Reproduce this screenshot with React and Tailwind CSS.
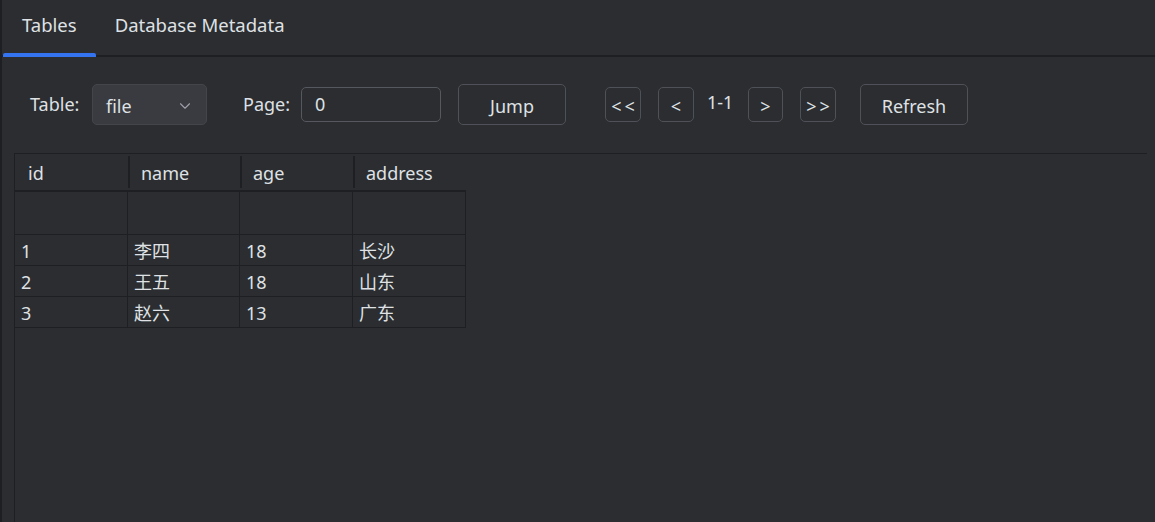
import { ChevronDown } from 'lucide-react';

const font = { fontFamily: '"Noto Sans", "Noto Sans CJK SC", sans-serif' };

const columns = ['id', 'name', 'age', 'address'];
const headWidths = ['w-[115px]', 'w-[112px]', 'w-[113px]', 'w-[111px]'];
const cellWidths = ['w-[113px]', 'w-[112px]', 'w-[113px]', 'w-[113px]'];

const rows = [
  { id: '', name: '', age: '', address: '', tall: true },
  { id: '1', name: '李四', age: '18', address: '长沙' },
  { id: '2', name: '王五', age: '18', address: '山东' },
  { id: '3', name: '赵六', age: '13', address: '广东' },
];

// outlined button used in the toolbar
const OutlineButton = ({ children, className = '' }) => (
  <button
    className={`flex items-center justify-center rounded-[5px] border border-[#4e5157] pt-[3px] text-[18px] text-[#dfe1e5] ${className}`}
  >
    {children}
  </button>
);

const Tab = ({ label, active }) => (
  <div className="relative h-full px-[19px] flex items-center pb-[5px] text-[18.5px]">
    <span>{label}</span>
    {active && <div className="absolute left-0 right-0 bottom-[-2px] h-[4px] rounded-t-[2px] bg-[#3574f0]" />}
  </div>
);

export default function App() {
  return (
    <div style={font} className="h-[522px] overflow-hidden bg-[#2b2d30] text-[#dfe1e5] border-l-2 border-[#1e1f22] flex flex-col">
      {/* tab strip */}
      <div className="h-[57px] flex items-stretch pl-px border-b-2 border-[#1e1f22] shrink-0">
        <Tab label="Tables" active />
        <Tab label="Database Metadata" />
      </div>

      {/* toolbar */}
      <div className="flex items-center pt-[27px] pb-[28px] pl-[28px] shrink-0">
        <span className="w-[62px] text-[18px]">Table:</span>
        <div className="w-[115px] h-[41px] rounded-[5px] border border-[#43454a] bg-[#393b40] flex items-center justify-between pl-[13px] pr-[12px]">
          <span className="text-[18px] pt-[3px]">file</span>
          <ChevronDown size={18} strokeWidth={1.5} className="text-[#9da0a8] mt-[2px]" />
        </div>
        <span className="ml-[36px] w-[58px] text-[18px]">Page:</span>
        <div className="w-[140px] h-[35px] rounded-[5px] border border-[#55585e] flex items-center pl-[13px] text-[18px]">0</div>
        <OutlineButton className="ml-[17px] w-[108px] h-[41px]">Jump</OutlineButton>
        <OutlineButton className="ml-[39px] w-[36px] h-[35px] tracking-[3px] pl-[3px]">&lt;&lt;</OutlineButton>
        <OutlineButton className="ml-[17px] w-[36px] h-[35px]">&lt;</OutlineButton>
        <span className="ml-[13px] w-[41px] text-[18px] -mt-[4px]">1-1</span>
        <OutlineButton className="w-[35px] h-[35px]">&gt;</OutlineButton>
        <OutlineButton className="ml-[17px] w-[36px] h-[35px] tracking-[3px] pl-[3px]">&gt;&gt;</OutlineButton>
        <OutlineButton className="ml-[24px] w-[108px] h-[41px]">Refresh</OutlineButton>
      </div>

      {/* result pane */}
      <div className="flex-1 ml-[12px] mr-[8px] border-l border-t border-[#1e1f22]">
        <div className="w-[451px]">
          <div className="flex h-[38px] border-b-2 border-[#1e1f22]">
            {columns.map((c, i) => (
              <div key={c} className={`${headWidths[i]} flex items-center`}>
                <div className={`flex-1 h-full flex items-center pt-[2px] text-[18px] ${i === 0 ? 'pl-[13px]' : 'pl-[11px]'}`}>{c}</div>
                {i < columns.length - 1 && <div className="w-[2px] h-[32px] bg-[#1e1f22]" />}
              </div>
            ))}
          </div>
          {rows.map((r, ri) => (
            <div key={ri} className={`flex border-b border-[#1e1f22] ${r.tall ? 'h-[43px]' : 'h-[31px]'}`}>
              {columns.map((c, i) => (
                <div
                  key={c}
                  className={`${cellWidths[i]} border-r border-[#1e1f22] flex items-center pl-[6px] pt-[3px] text-[18px]`}
                >
                  {r[c]}
                </div>
              ))}
            </div>
          ))}
        </div>
      </div>
    </div>
  );
}
